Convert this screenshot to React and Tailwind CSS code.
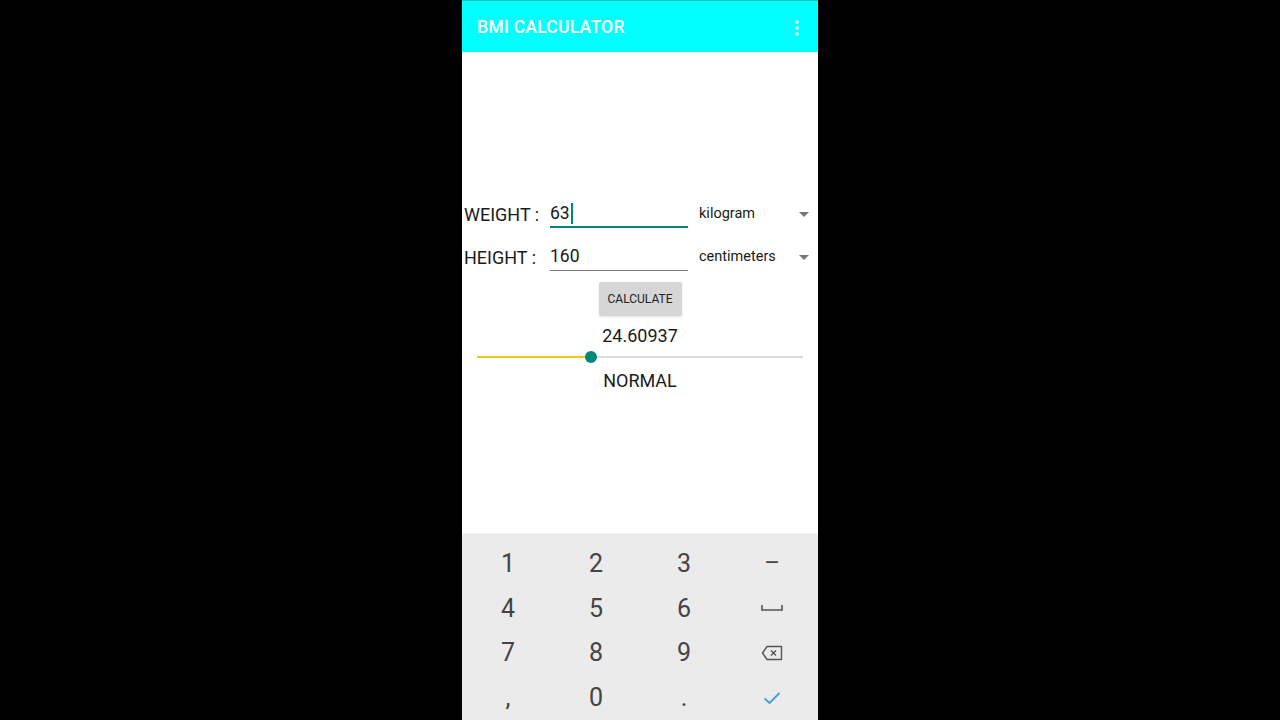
import React from 'react';

const keys = ['1', '2', '3', 'minus', '4', '5', '6', 'space', '7', '8', '9', 'back', ',', '0', '.', 'done'];

const Key = ({ k }) => {
    if (k === 'minus') {
        return <span className="text-[24px] text-[#444]">–</span>;
    }
    if (k === 'space') {
        return (
            <svg width="22" height="8" viewBox="0 0 22 8">
                <path d="M1 1 V6 H21 V1" fill="none" stroke="#555" strokeWidth="1.6" />
            </svg>
        );
    }
    if (k === 'back') {
        return (
            <svg width="22" height="16" viewBox="0 0 22 16">
                <path d="M6 1.5 H20.5 V14.5 H6 L1.5 8 Z" fill="none" stroke="#555" strokeWidth="1.4" strokeLinejoin="round" />
                <path d="M10 5.5 L15 10.5 M15 5.5 L10 10.5" stroke="#555" strokeWidth="1.4" />
            </svg>
        );
    }
    if (k === 'done') {
        return (
            <svg width="18" height="14" viewBox="0 0 18 14">
                <path d="M1.5 7.5 L6.5 12 L16.5 2" fill="none" stroke="#3ba0e0" strokeWidth="1.8" />
            </svg>
        );
    }
    return <span className="text-[25px] text-[#444] leading-none">{k}</span>;
};

const App = () => {
    return (
        <div className="flex justify-center h-[720px] bg-black" style={{ fontFamily: 'Roboto, sans-serif' }}>
            <div className="w-[356px] h-[720px] flex flex-col bg-white">
                {/* app bar */}
                <div className="h-[52px] bg-[#00ffff] border-t border-[#1ec8b0] flex items-center justify-between pl-[15px] pr-[16px] pt-[2px]">
                    <span className="text-white font-medium text-[17.6px] tracking-[0.2px]">BMI CALCULATOR</span>
                    <svg width="4" height="16" viewBox="0 0 4 16" className="mr-[3px]">
                        <circle cx="2" cy="2" r="1.8" fill="white" />
                        <circle cx="2" cy="8" r="1.8" fill="white" />
                        <circle cx="2" cy="14" r="1.8" fill="white" />
                    </svg>
                </div>

                <div className="flex-1 flex flex-col">
                    <div className="h-[143px]" />

                    {/* weight */}
                    <div className="flex items-end h-[33px] pl-[2px]">
                        <span className="w-[86px] text-[18px] text-[#1a1a1a]">WEIGHT :</span>
                        <div className="w-[138px] h-[31px] border-b-2 border-[#00897b] flex items-center pt-[3px]">
                            <span className="text-[17.5px] text-[#1a1a1a]">63</span>
                            <span className="w-[2px] h-[21px] bg-[#00897b] ml-[1px]" />
                        </div>
                        <div className="flex-1 flex items-center justify-between pl-[11px] pr-[9px] h-[31px] pt-[3px]">
                            <span className="text-[14.5px] text-[#1a1a1a]">kilogram</span>
                            <span className="w-0 h-0 border-l-[5px] border-r-[5px] border-t-[5px] border-l-transparent border-r-transparent border-t-[#777]" />
                        </div>
                    </div>

                    {/* height */}
                    <div className="flex items-end h-[33px] pl-[2px] mt-[10px]">
                        <span className="w-[86px] text-[18px] text-[#1a1a1a]">HEIGHT :</span>
                        <div className="w-[138px] h-[31px] border-b border-[#777] flex items-center pt-[3px]">
                            <span className="text-[17.5px] text-[#1a1a1a]">160</span>
                        </div>
                        <div className="flex-1 flex items-center justify-between pl-[11px] pr-[9px] h-[31px] pt-[3px]">
                            <span className="text-[14.5px] text-[#1a1a1a]">centimeters</span>
                            <span className="w-0 h-0 border-l-[5px] border-r-[5px] border-t-[5px] border-l-transparent border-r-transparent border-t-[#777]" />
                        </div>
                    </div>

                    {/* calculate */}
                    <div className="flex justify-center mt-[11px]">
                        <button className="w-[83px] h-[34px] bg-[#d6d6d6] rounded-[2px] text-[12px] text-[#222] shadow-sm">
                            CALCULATE
                        </button>
                    </div>

                    <div className="text-center text-[18px] text-[#1a1a1a] mt-[9px] leading-[22px]">24.60937</div>

                    {/* slider */}
                    <div className="relative mx-[15px] h-[14px] mt-[3px] flex items-center">
                        <div className="h-[2px] w-full bg-[#dcdcdc]" />
                        <div className="absolute left-0 h-[2px] w-[114px] bg-[#f5c518]" />
                        <div className="absolute left-[108px] w-[12px] h-[12px] rounded-full bg-[#00897b]" />
                    </div>

                    <div className="text-center text-[18px] text-[#1a1a1a] mt-[6px] leading-[22px]">NORMAL</div>
                </div>

                {/* keyboard */}
                <div className="h-[187px] bg-[#ebebeb] border-t border-[#f4f4f4] grid grid-cols-4 grid-rows-4 pt-[7px] px-[2px]">
                    {keys.map((k) => (
                        <div key={k} className="flex items-center justify-center">
                            <Key k={k} />
                        </div>
                    ))}
                </div>
            </div>
        </div>
    );
};

export default App;
